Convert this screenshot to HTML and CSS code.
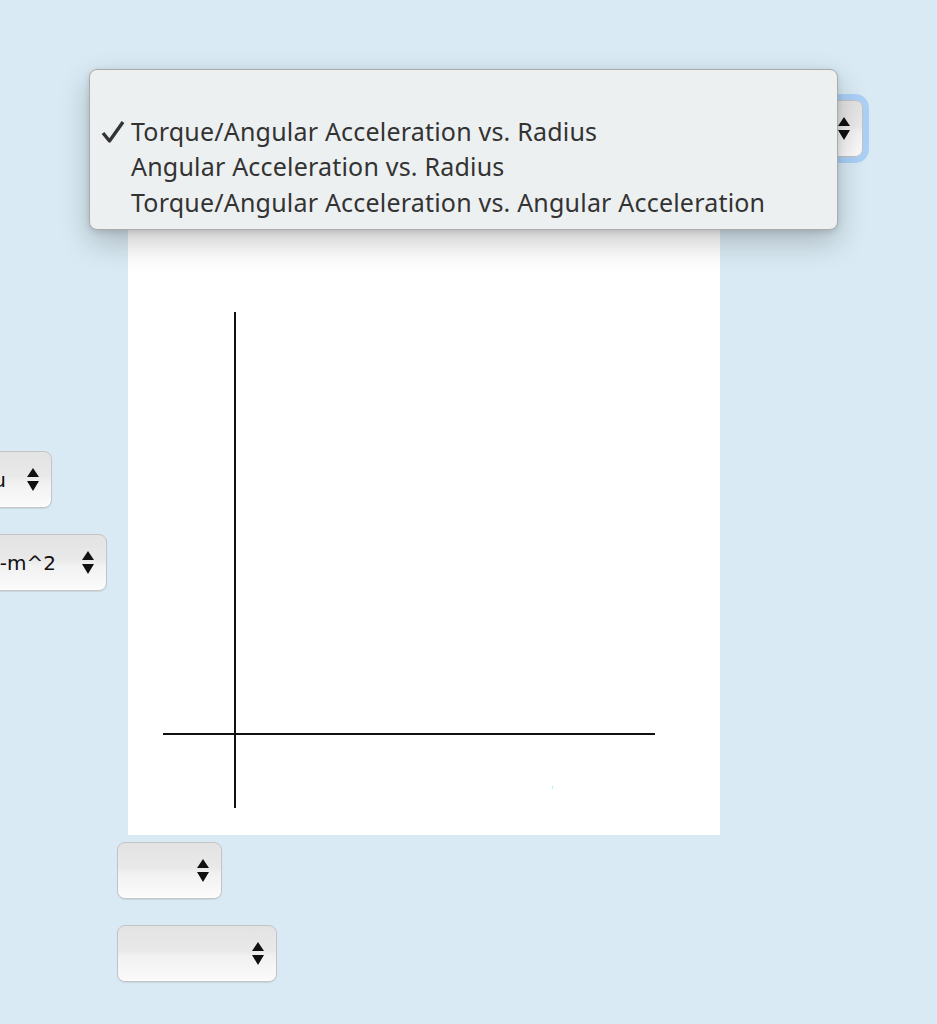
FILE: index.html
```html
<!DOCTYPE html>
<html lang="en">
<head>
  <meta charset="UTF-8">
  <meta name="viewport" content="width=device-width, initial-scale=1.0">
  <title>Torque Lab - Graph</title>
  <link rel="stylesheet" href="styles.css">
</head>
<body>
  <div class="page">
    <div class="top-bar">
      <div class="select select-graph focused">
        <span class="select-text">Torque/Angular Acceleration vs. Radius</span>
        <svg class="arrows" width="12" height="23" viewBox="0 0 12 23"><path d="M6 0 L12 9 L0 9 Z M0 13 L12 13 L6 23 Z" fill="#111"/></svg>
      </div>
    </div>

    <div class="workspace">
      <div class="side">
        <div class="select select-units">
          <span class="select-text">amu</span>
          <svg class="arrows" width="12" height="23" viewBox="0 0 12 23"><path d="M6 0 L12 9 L0 9 Z M0 13 L12 13 L6 23 Z" fill="#111"/></svg>
        </div>
        <div class="select select-inertia">
          <span class="select-text">kg-m^2</span>
          <svg class="arrows" width="12" height="23" viewBox="0 0 12 23"><path d="M6 0 L12 9 L0 9 Z M0 13 L12 13 L6 23 Z" fill="#111"/></svg>
        </div>
      </div>
      <div class="chart">
        <svg width="592" height="658" viewBox="0 0 592 658">
          <line x1="107" y1="135" x2="107" y2="631" stroke="#111" stroke-width="2"/>
          <line x1="35" y1="557" x2="527" y2="557" stroke="#111" stroke-width="2"/>
          <rect x="424" y="609" width="1" height="3" fill="#aaf8f8"/>
        </svg>
      </div>
    </div>

    <div class="bottom">
      <div class="select select-small">
        <span class="select-text"></span>
        <svg class="arrows" width="12" height="23" viewBox="0 0 12 23"><path d="M6 0 L12 9 L0 9 Z M0 13 L12 13 L6 23 Z" fill="#111"/></svg>
      </div>
      <div class="select select-wide">
        <span class="select-text"></span>
        <svg class="arrows" width="12" height="23" viewBox="0 0 12 23"><path d="M6 0 L12 9 L0 9 Z M0 13 L12 13 L6 23 Z" fill="#111"/></svg>
      </div>
    </div>

    <div class="menu">
      <div class="menu-item"></div>
      <div class="menu-item checked">
        <svg class="check" width="24" height="24" viewBox="0 0 24 24"><polyline points="2,13 8.5,21 22,2" fill="none" stroke="#333" stroke-width="3.4" stroke-linejoin="round"/></svg>
        Torque/Angular Acceleration vs. Radius
      </div>
      <div class="menu-item">Angular Acceleration vs. Radius</div>
      <div class="menu-item">Torque/Angular Acceleration vs. Angular Acceleration</div>
    </div>
  </div>
</body>
</html>
```

FILE: styles.css
```css
body {
  margin: 0;
  padding: 0;
  background-color: #d9eaf4;
  font-family: 'Noto Sans', 'Liberation Sans', Arial, sans-serif;
  color: #333;
  overflow: hidden;
}
.page {
  position: relative;
  width: 937px;
  height: 1024px;
}
.top-bar {
  display: flex;
  justify-content: flex-end;
  padding: 100px 74px 0 0;
}
.workspace {
  display: flex;
  gap: 20px;
  margin-top: 20px;
}
.side {
  width: 108px;
  display: flex;
  flex-direction: column;
  gap: 26px;
  padding-top: 274px;
}
.chart {
  width: 592px;
  height: 658px;
  background-color: white;
}
.chart svg {
  display: block;
}
.bottom {
  display: flex;
  flex-direction: column;
  gap: 26px;
  padding: 7px 0 0 117px;
}

/* select boxes */
.select {
  box-sizing: border-box;
  height: 57px;
  display: flex;
  align-items: center;
  justify-content: flex-end;
  gap: 24px;
  padding-right: 12px;
  border: 1px solid #c4c4c4;
  border-radius: 8px;
  background: linear-gradient(to bottom, #e3e3e3 0%, #e9e9e9 45%, #f1f1f1 55%, #fbfbfb 100%);
  box-shadow: inset 0 -1px 1px rgba(255, 255, 255, 0.9), 0 1px 1px rgba(0, 0, 0, 0.08);
  font-family: 'DejaVu Sans', Verdana, sans-serif;
  font-size: 20px;
  color: #111;
  white-space: nowrap;
  overflow: hidden;
}
.select .arrows {
  flex-shrink: 0;
}
.select.focused {
  box-shadow: 0 0 0 6px #abd0f6;
}
.select-graph {
  width: 230px;
}
.select-units {
  width: 120px;
  margin-left: -68px;
  gap: 21px;
}
.select-inertia {
  width: 200px;
  margin-left: -93px;
  gap: 26px;
}
.select-small {
  width: 105px;
}
.select-wide {
  width: 160px;
}

/* open dropdown */
.menu {
  position: absolute;
  left: 89px;
  top: 69px;
  width: 749px;
  box-sizing: border-box;
  padding: 8px 0 9px 0;
  background-color: #edf0f0;
  border: 1px solid #a9abac;
  border-radius: 8px;
  box-shadow: 0 12px 30px rgba(0, 0, 0, 0.22), 0 2px 6px rgba(0, 0, 0, 0.12);
}
.menu-item {
  position: relative;
  height: 35.5px;
  line-height: 35.5px;
  padding-left: 41px;
  font-size: 25px;
  letter-spacing: 0.2px;
  color: #333;
  white-space: nowrap;
}
.menu-item .check {
  position: absolute;
  left: 11px;
  top: 6px;
}
```
